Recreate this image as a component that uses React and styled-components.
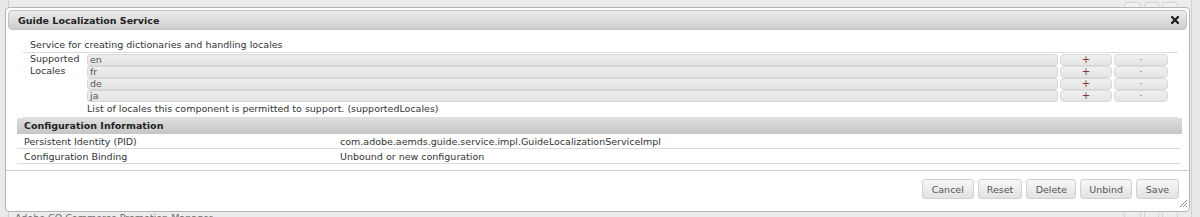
import React from "react";
import styled, { createGlobalStyle } from "styled-components";

const GlobalStyle = createGlobalStyle`
  html, body { margin: 0; padding: 0; }
  body {
    font-family: "DejaVu Sans", Verdana, sans-serif;
    font-size: 9.5px;
    color: #333;
    background: #e9e9e9;
    overflow: hidden;
  }
`;

const Page = styled.div`
  position: relative;
  width: 1200px;
  height: 217px;
  overflow: hidden;
  background: #e9e9e9;
`;

const BehindTable = styled.div`
  margin: -24px 8px 0 8px;
  border-left: 1px solid #cfcfcf;
  border-right: 1px solid #cfcfcf;
  background: #ececec;
`;

const BehindRow = styled.div`
  height: 23px;
  display: flex;
  align-items: center;
  justify-content: space-between;
  padding: 0 13px 0 6px;
  border-bottom: 1px solid #dedede;
  box-sizing: border-box;
  color: #6a6a6a;
  font-size: 9.5px;
`;

const MiniActions = styled.div`
  display: flex;
  gap: 3px;
`;

const MiniButton = styled.span`
  width: ${(p) => p.$w || 15}px;
  height: 17px;
  border: 1px solid #d2d2d2;
  border-radius: 3px;
  background: linear-gradient(#f2f2f2, #e2e2e2);
  box-sizing: border-box;
`;

const Dialog = styled.div`
  position: absolute;
  left: 5px;
  top: 7px;
  width: 1185px;
  height: 205px;
  box-sizing: border-box;
  border: 1px solid #b4b4b4;
  border-radius: 4px;
  background: #fff;
  padding: 2px;
  display: flex;
  flex-direction: column;
`;

const TitleBar = styled.div`
  height: 20px;
  box-sizing: border-box;
  border: 1px solid #c2c2c2;
  border-radius: 4px;
  background: linear-gradient(#ececec, #cdcdcd);
  display: flex;
  align-items: center;
  justify-content: space-between;
  padding: 0 7px 0 9px;
  flex: none;
`;

const Title = styled.span`
  font-weight: bold;
  color: #222;
  font-size: 9.5px;
`;

const CloseIcon = styled.svg`
  width: 8px;
  height: 8px;
  display: block;
`;

const Content = styled.div`
  flex: 1;
  padding: 8px 5px 0 9px;
  display: flex;
  flex-direction: column;
`;

const PropTable = styled.div`
  margin: 0 4px 0 6px;
  display: flex;
  flex-direction: column;
`;

const DescRow = styled.div`
  height: 14px;
  line-height: 14px;
  padding-left: 7px;
  border-bottom: 1px solid #dcdcdc;
`;

const PropRow = styled.div`
  display: grid;
  grid-template-columns: 64px 1fr;
  padding: 1px 0 2px 0;
  border-bottom: 1px solid #dcdcdc;
`;

const PropLabel = styled.div`
  padding-left: 7px;
  line-height: 12px;
  margin-top: -1px;
`;

const PropValue = styled.div`
  display: flex;
  flex-direction: column;
  padding-right: 10px;
`;

const LocaleRow = styled.div`
  display: grid;
  grid-template-columns: 1fr 52px 54px;
  column-gap: 2px;
  height: 12px;
`;

const LocaleInput = styled.div`
  height: 12px;
  box-sizing: border-box;
  border: 1px solid #d7d7d7;
  border-radius: 3px;
  background: linear-gradient(#ededed, #e3e3e3);
  color: #555;
  padding-left: 2px;
  line-height: 10px;
  font-size: 9.5px;
`;

const RowButton = styled.div`
  height: 12px;
  box-sizing: border-box;
  border: 1px solid #d9d9d9;
  border-radius: 4px;
  background: linear-gradient(#f1f1f1, #e4e4e4);
  display: flex;
  align-items: center;
  justify-content: center;
  color: ${(p) => (p.$plus ? "#8a3144" : "#8c8c8c")};
  font-size: ${(p) => (p.$plus ? "10px" : "8px")};
  line-height: 10px;
`;

const Hint = styled.div`
  height: 13px;
  line-height: 13px;
`;

const SectionHeader = styled.div`
  height: 16px;
  line-height: 16px;
  padding-left: 7px;
  font-weight: bold;
  color: #222;
  background: linear-gradient(#dfdfdf, #c5c5c5);
`;

const InfoRow = styled.div`
  display: grid;
  grid-template-columns: 323px 1fr;
  height: 15px;
  line-height: 15px;
  box-sizing: border-box;
  border-bottom: 1px solid #dcdcdc;
  margin-right: 1px;
`;

const InfoCell = styled.div`
  padding-left: ${(p) => (p.$first ? "7px" : "0")};
  white-space: nowrap;
`;

const ButtonPane = styled.div`
  flex: none;
  height: 39px;
  box-sizing: border-box;
  border-top: 1px solid #cfcfcf;
  margin: 0 -2px;
  display: flex;
  justify-content: flex-end;
  align-items: flex-start;
  gap: 4px;
  padding: 8px 10px 0 0;
  position: relative;
`;

const Button = styled.button`
  height: 20px;
  box-sizing: border-box;
  border: 1px solid #d0d0d0;
  border-radius: 3px;
  background: linear-gradient(#f7f7f7, #e2e2e2);
  color: #555;
  font-family: "DejaVu Sans", Verdana, sans-serif;
  font-size: 9.5px;
  padding: 0 8px;
  margin: 0;
  min-width: ${(p) => p.$w}px;
`;

const ResizeHandle = styled.svg`
  position: absolute;
  right: 1px;
  bottom: 1px;
  width: 9px;
  height: 9px;
`;

const locales = ["en", "fr", "de", "ja"];
const behindRows = Array.from({ length: 11 });

export default function App() {
  return (
    <Page>
      <GlobalStyle />
      <BehindTable>
        {behindRows.map((_, i) => (
          <BehindRow key={i}>
            <span>{i === 10 ? "Adobe CQ Commerce Promotion Manager" : ""}</span>
            <MiniActions>
              <MiniButton $w={17} />
              <MiniButton $w={15} />
              <MiniButton $w={16} />
            </MiniActions>
          </BehindRow>
        ))}
      </BehindTable>

      <Dialog>
        <TitleBar>
          <Title>Guide Localization Service</Title>
          <CloseIcon viewBox="0 0 8 8">
            <path d="M1 1 L7 7 M7 1 L1 7" stroke="#1e1e1e" strokeWidth="2.2" strokeLinecap="square" />
          </CloseIcon>
        </TitleBar>

        <Content>
          <PropTable>
            <DescRow>Service for creating dictionaries and handling locales</DescRow>
            <PropRow>
              <PropLabel>
                Supported
                <br />
                Locales
              </PropLabel>
              <PropValue>
                {locales.map((l) => (
                  <LocaleRow key={l}>
                    <LocaleInput>{l}</LocaleInput>
                    <RowButton $plus>+</RowButton>
                    <RowButton>-</RowButton>
                  </LocaleRow>
                ))}
                <Hint>List of locales this component is permitted to support. (supportedLocales)</Hint>
              </PropValue>
            </PropRow>
          </PropTable>

          <SectionHeader>Configuration Information</SectionHeader>
          <InfoRow>
            <InfoCell $first>Persistent Identity (PID)</InfoCell>
            <InfoCell>com.adobe.aemds.guide.service.impl.GuideLocalizationServiceImpl</InfoCell>
          </InfoRow>
          <InfoRow>
            <InfoCell $first>Configuration Binding</InfoCell>
            <InfoCell>Unbound or new configuration</InfoCell>
          </InfoRow>
        </Content>

        <ButtonPane>
          <Button $w={52}>Cancel</Button>
          <Button $w={44}>Reset</Button>
          <Button $w={50}>Delete</Button>
          <Button $w={50}>Unbind</Button>
          <Button $w={43}>Save</Button>
          <ResizeHandle viewBox="0 0 9 9">
            <path d="M8 1 L1 8 M8 4 L4 8 M8 7 L7 8" stroke="#8a8a8a" strokeWidth="1" />
          </ResizeHandle>
        </ButtonPane>
      </Dialog>
    </Page>
  );
}
